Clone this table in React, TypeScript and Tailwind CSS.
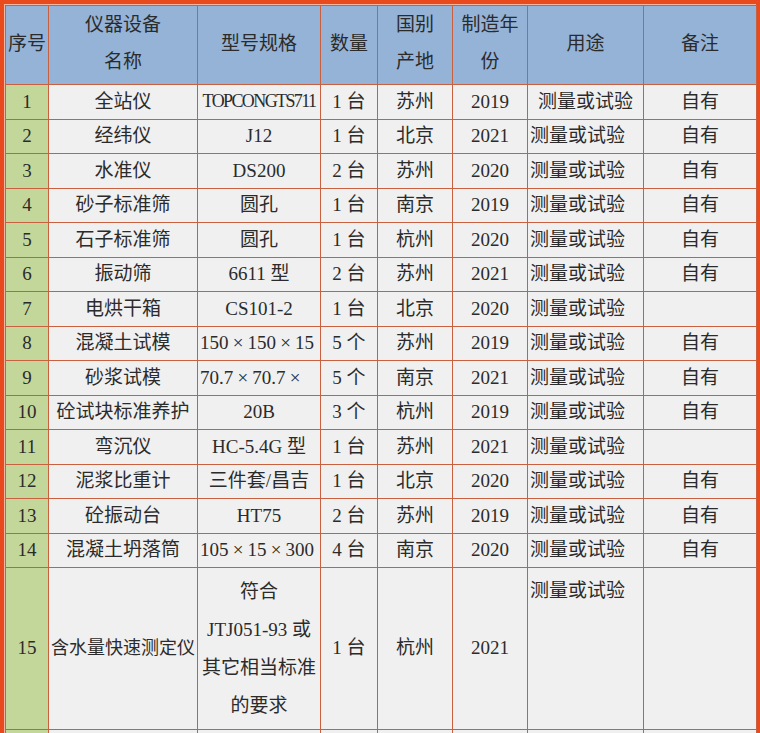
import React from "react";

interface Row {
  no: string;
  name: string;
  model: string;
  qty: string;
  place: string;
  year: string;
  use: string;
  note: string;
}

const rows: Row[] = [
  { no: "1", name: "全站仪", model: "TOPCONGTS711", qty: "1 台", place: "苏州", year: "2019", use: "测量或试验", note: "自有" },
  { no: "2", name: "经纬仪", model: "J12", qty: "1 台", place: "北京", year: "2021", use: "测量或试验", note: "自有" },
  { no: "3", name: "水准仪", model: "DS200", qty: "2 台", place: "苏州", year: "2020", use: "测量或试验", note: "自有" },
  { no: "4", name: "砂子标准筛", model: "圆孔", qty: "1 台", place: "南京", year: "2019", use: "测量或试验", note: "自有" },
  { no: "5", name: "石子标准筛", model: "圆孔", qty: "1 台", place: "杭州", year: "2020", use: "测量或试验", note: "自有" },
  { no: "6", name: "振动筛", model: "6611 型", qty: "2 台", place: "苏州", year: "2021", use: "测量或试验", note: "自有" },
  { no: "7", name: "电烘干箱", model: "CS101-2", qty: "1 台", place: "北京", year: "2020", use: "测量或试验", note: "" },
  { no: "8", name: "混凝土试模", model: "150×150×15", qty: "5 个", place: "苏州", year: "2019", use: "测量或试验", note: "自有" },
  { no: "9", name: "砂浆试模", model: "70.7×70.7×", qty: "5 个", place: "南京", year: "2021", use: "测量或试验", note: "自有" },
  { no: "10", name: "砼试块标准养护", model: "20B", qty: "3 个", place: "杭州", year: "2019", use: "测量或试验", note: "自有" },
  { no: "11", name: "弯沉仪", model: "HC-5.4G 型", qty: "1 台", place: "苏州", year: "2021", use: "测量或试验", note: "" },
  { no: "12", name: "泥浆比重计", model: "三件套/昌吉", qty: "1 台", place: "北京", year: "2020", use: "测量或试验", note: "自有" },
  { no: "13", name: "砼振动台", model: "HT75", qty: "2 台", place: "苏州", year: "2019", use: "测量或试验", note: "自有" },
  { no: "14", name: "混凝土坍落筒", model: "105×15×300", qty: "4 台", place: "南京", year: "2020", use: "测量或试验", note: "自有" },
];

const font = { fontFamily: '"Liberation Serif", "Noto Sans CJK SC", serif' };

function Wide({ text }: { text: string }) {
  const parts = text.split("×");
  return (
    <>
      {parts.map((p, i) => (
        <React.Fragment key={i}>
          {p}
          {i < parts.length - 1 && <span className="inline-block w-[1em] text-center">×</span>}
        </React.Fragment>
      ))}
    </>
  );
}

const cell = "border border-[#c9603f] bg-[#f0f0f0] text-center align-middle whitespace-nowrap overflow-hidden p-0";
const head = "border border-[#c9603f] bg-[#95b3d7] text-center align-middle p-0 pb-1 font-normal leading-[37px]";

export default function App() {
  return (
    <div className="w-[760px] h-[733px] overflow-hidden bg-[#f0f0f0]">
      <div className="border-t-4 border-l-4 border-r-4 border-[#e8491d] h-[745px]">
        <div className="border-t border-l border-r border-[#f4b8a4] h-full">
          <table
            className="table-fixed border-collapse text-[19px] text-[#2b2b2b] w-[751px]"
            style={font}
          >
            <colgroup>
              <col className="w-[43px]" />
              <col className="w-[149px]" />
              <col className="w-[123px]" />
              <col className="w-[57px]" />
              <col className="w-[75px]" />
              <col className="w-[75px]" />
              <col className="w-[116px]" />
              <col className="w-[113px]" />
            </colgroup>
            <thead>
              <tr className="h-[78px]">
                <th className={head}>序号</th>
                <th className={head}>仪器设备<br />名称</th>
                <th className={head}>型号规格</th>
                <th className={head}>数量</th>
                <th className={head}>国别<br />产地</th>
                <th className={head}>制造年<br />份</th>
                <th className={head}>用途</th>
                <th className={head}>备注</th>
              </tr>
            </thead>
            <tbody>
              {rows.map((r, i) => {
                const clipped = r.model.includes("×");
                return (
                  <tr key={r.no} className="h-[34.5px]">
                    <td className={`${cell} !bg-[#c4d79b]`}>{r.no}</td>
                    <td className={cell}>{r.name}</td>
                    <td className={`${cell} ${clipped ? "!text-left pl-[2px]" : ""} ${r.model === "TOPCONGTS711" ? "tracking-[-1.6px] text-[18px]" : ""}`}>
                      <Wide text={r.model} />
                    </td>
                    <td className={cell}>{r.qty}</td>
                    <td className={cell}>{r.place}</td>
                    <td className={cell}>{r.year}</td>
                    <td className={`${cell} ${i === 0 ? "" : "!text-left pl-[2px]"}`}>{r.use}</td>
                    <td className={cell}>{r.note}</td>
                  </tr>
                );
              })}
              <tr className="h-[162px]">
                <td className={`${cell} !bg-[#c4d79b]`}>15</td>
                <td className={`${cell} text-[18px]`}>含水量快速测定仪</td>
                <td className={`${cell} whitespace-normal leading-[38px]`}>
                  符合<br />JTJ051-93 或<br />其它相当标准<br />的要求
                </td>
                <td className={cell}>1 台</td>
                <td className={cell}>杭州</td>
                <td className={cell}>2021</td>
                <td className={`${cell} !text-left !align-top pl-[2px] pt-[9px]`}>测量或试验</td>
                <td className={cell}></td>
              </tr>
              <tr className="h-[34.5px]">
                <td className={`${cell} !bg-[#c4d79b]`}></td>
                <td className={cell}></td>
                <td className={cell}></td>
                <td className={cell}></td>
                <td className={cell}></td>
                <td className={cell}></td>
                <td className={cell}></td>
                <td className={cell}></td>
              </tr>
            </tbody>
          </table>
        </div>
      </div>
    </div>
  );
}
